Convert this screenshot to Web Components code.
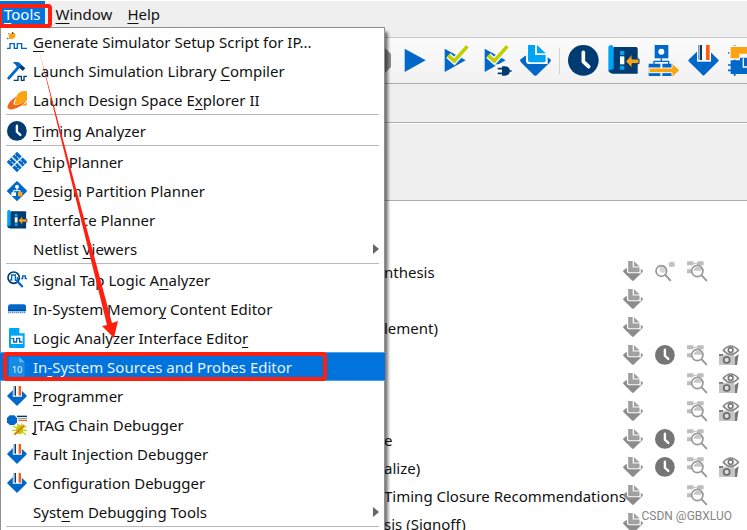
<!DOCTYPE html>
<html lang="en">
<head>
<meta charset="utf-8">
<title>Tools menu</title>
<style>
html, body { margin: 0; height: 100%; overflow: hidden; }
body { font: 15px/20px "Noto Sans", "Open Sans", sans-serif; color: #111; background: #efefef; }
</style>
</head>
<body>
<app-window></app-window>
<script>
const B = '#0068c9', N = '#003c71', C = '#00a4f4', O = '#fca311';
const diamond = (c) => `<path fill="${c}" stroke="${c}" stroke-width="6" stroke-linejoin="round" d="M46.500 4 89 46.500 46.500 89 4 46.500z"/>`;
const clock = (c) => `<circle cx="46" cy="46" r="46" fill="${c}"/><path d="M46 22V50L62 65" fill="none" stroke="#fff" stroke-width="11" stroke-linecap="round" stroke-linejoin="round"/>`;
const doc = (a, b, bg) => `<path fill="${a}" d="M16 32 2 43q-3 4 0 8L42 91q4 3 8 0L91 51q3-4 0-8L77 32z"/>
  <path fill="${bg}" d="M18 0H54L83 26V57H28Q18 57 18 47z"/><path fill="${b}" d="M24 0H45V30H77V46Q77 52 71 52H30Q24 52 24 46zM51 0 77 25H51z"/>`;
const play = `<path fill="${B}" d="M14 11 77 46 14 81z"/>`;
const check = `<path d="M25 32 43 48 81 5" fill="none" stroke="#fafafa" stroke-width="19"/><path d="M24 31 43 48 82 4" fill="none" stroke="#c1cf00" stroke-width="11"/>`;
const prog = diamond(B) + `<path fill="#fff" d="M27 -2H69V50H27z"/><path fill="${N}" d="M35 0h7v45h-7z"/><path fill="#8b99a8" d="M30 0h3v44h-3z"/><path fill="#ff5a10" d="M54 0h11v45H54z"/>`;
const iface = `<path fill="${N}" d="M17 6H84q5 0 5 5V86H14q-12-1-12-10z"/><path fill="${C}" d="M1 6q2-6 8-6t8 6V72Q6 72 1 80z"/>
  <path fill="${C}" d="M36 18h13v12H36zM36 62h13v12H36z"/><path fill="#fff" d="M36 34h13v24H36z"/>
  <path fill="${O}" stroke="${N}" stroke-width="3" d="M53 49 72 28V42H93V56H72V70z"/>`;
const glass = (x, y, r, c) => `<circle cx="${x}" cy="${y}" r="${r}" fill="none" stroke="${c}" stroke-width="5"/><path stroke="${c}" stroke-width="6" stroke-linecap="round" d="M${x + r - 4} ${y + r - 4} ${x + 27} ${y + 28}"/>`;
const ICONS = {
  stop: [93, `<path fill="#8c8c8c" d="M27 0H66L93 27V66L66 93H27L0 66V27z"/>`],
  play: [93, play],
  check: [93, play + check],
  checkplug: [93, play + check + `<path fill="#fafafa" d="M46 58H92V94H46z"/><path fill="${N}" d="M66 64h10q14 2 14 14T76 92H66z"/><path stroke="${N}" stroke-width="5" d="M53 71h14M53 85h14M88 78h7"/>`],
  compile: [93, doc(B, C, '#fafafa')],
  compileGrey: [93, doc('#8c8c8c', '#a0a0a0', '#fff')],
  clock: [93, clock(N)],
  clockGrey: [93, clock('#757575')],
  iface: [93, iface],
  chiptree: [93, `<path fill="${B}" d="M20 0h41v40H20z"/><circle cx="40" cy="20" r="9" fill="#fff"/><path fill="none" stroke="${B}" stroke-width="4" d="M40 40V50M18 58V49H62V58"/>
    <path fill="${B}" d="M2 56h35v37H2zM43 56h34v37H43z"/><path fill="${O}" stroke="#fafafa" stroke-width="3" d="M3 69H72V54L95 76 72 98V83H3z"/>`],
  prog: [93, prog],
  pins: [93, `<path stroke="${B}" stroke-width="5" d="M20 0V93M0 24H15M0 60H15M0 76H15M70 0V93"/><path fill="#fafafa" d="M4 2H93V44H4z"/><path fill="${O}" d="M8 6H93V26H34V40H8z"/><path fill="${B}" d="M8 46H36V38H93V87H8z"/><path fill="none" stroke="#fff" stroke-width="4" d="M46 40V66H70"/>`],
  simscript: [60, `<path fill="${O}" d="M5 10 11 4H25V15L17 21H7z"/><path fill="#222" d="M15 1h4v4h-4zM1 17h3v5H1zM4 4h3v3H4z"/><path fill="none" stroke="${B}" stroke-width="4" d="M0 49H9V35H22V49H31V35H44V49H60"/>`],
  hammer: [60, `<path stroke="${B}" stroke-width="8" d="M3 54 35 18"/><path fill="${N}" d="M18 5Q35-1 43 11L55 22 47 30 38 21 31 22Q30 10 18 5z"/><path fill="${B}" d="M18 5Q35-1 43 11L39 19 31 22Q30 10 18 5z"/><path fill="none" stroke="${N}" stroke-width="4" d="M20 58H33V46H43V58H51V46H60"/>`],
  planet: [60, `<path fill="#f0641e" d="M29 19Q3 36 1 51Q3 60 17 58Q42 53 60 31Q42 43 26 46Q12 46 29 19z"/><path fill="${O}" d="M60 4V31Q44 43 24 45Q22 40 29 18Q38 0 60 4zM60 37V44Q54 50 44 46Q54 43 60 37z"/>`],
  chip: [60, `<path fill="${B}" stroke="${B}" stroke-width="4" stroke-linejoin="round" d="M30 2 58 30 30 58 2 30z"/><path stroke="#fff" stroke-width="4" d="M14 14 46 46M46 14 14 46"/><path stroke="#fff" stroke-width="3" stroke-dasharray="8 4" d="M22 6 54 38M6 22 38 54"/>`],
  partition: [60, `<path fill="${B}" stroke="${B}" stroke-width="4" stroke-linejoin="round" d="M30 2 58 30 30 58 2 30z"/><circle cx="30" cy="17" r="6" fill="#fff"/><path fill="none" stroke="#fff" stroke-width="3" d="M30 20V29M19 36V29H39V36"/><path fill="#fff" d="M13 34H27V45H13z"/><path fill="${O}" d="M33 33H46V46H33z"/>`],
  signal: [60, `<circle cx="20" cy="23" r="17" fill="none" stroke="${N}" stroke-width="5"/><path stroke="${B}" stroke-width="7" stroke-linecap="round" d="M33 36 45 49"/><path fill="none" stroke="${B}" stroke-width="4" d="M8 30H14V15H25V31H31V21M42 26H47V18H55V26H60"/>`],
  memory: [60, `<path fill="${B}" d="M3 35V22Q4 16 10 16H50Q57 16 57 22V35z"/><path stroke="${N}" stroke-width="3" d="M3 34H57"/><path stroke="${B}" stroke-width="6" stroke-dasharray="3 3" d="M4 40H57"/>`],
  logic: [60, `<path fill="${C}" d="M6 4Q6 0 10 0H37L53 16V56Q53 60 49 60H10Q6 60 6 56z"/><path fill="#fff" d="M37 0 53 16H37z"/><path fill="#fff" d="M12 23H47V48H12z"/><path fill="none" stroke="${B}" stroke-width="4" d="M13 32H20V42H29V31H38V42H46"/>`],
  probes: [60, `<path fill="#168be8" d="M6 4Q6 0 10 0H37L53 16V56Q53 60 49 60H10Q6 60 6 56z"/><path fill="#64b7fa" d="M37 0 53 16H37z"/><text x="30" y="47" text-anchor="middle" fill="#e6f4ff" font-family="Noto Sans, sans-serif" font-size="28">10</text>`],
  jtag: [60, `<path fill="${B}" d="M8 1H22L30 9V22L22 30H8L0 22V9z"/><path stroke="${N}" stroke-width="4" d="M30 4H60"/><path stroke="#7890a8" stroke-width="3" d="M32 10H60"/><path stroke="#f0641e" stroke-width="4" d="M34 16H60"/>
    <ellipse cx="38" cy="44" rx="11" ry="14" fill="#c1cf00"/><path stroke="#c1cf00" stroke-width="4" d="M18 33 28 39M15 46H60M20 59 28 52M58 33 48 39M57 59 48 52M31 26 35 32M46 26 42 32"/><path stroke="#f0641e" stroke-width="5" d="M23 59 52 30"/>`],
  findGrey: [60, `<circle cx="20" cy="29" r="16" fill="#fff"/><circle cx="24" cy="24" r="11" fill="#d6d6d6"/>${glass(19, 30, 16, '#999')}<path fill="#c4c4c4" d="M41 6 47 2H56L60 7V14L55 18H44L41 13z"/>`],
  netGrey: [60, `<path fill="#bdbdbd" d="M0 1H19V13H0zM31 1H50V13H31zM0 25H15V37H0z"/><path stroke="#bdbdbd" stroke-width="3" d="M18 7H32"/><circle cx="31" cy="30" r="17" fill="#fff"/><path fill="#c8c8c8" d="M31 17H45V29H20Q22 17 31 17z"/>${glass(31, 30, 17, '#999')}`],
  snapGrey: [60, `<path fill="#c4c4c4" d="M0 29H46V60H0z"/><path fill="#777" d="M0 27H12V32H0zM47 36 59 28 54 60H47z"/><circle cx="23" cy="45" r="9" fill="#ddd" stroke="#666" stroke-width="5"/><path fill="#fff" stroke="#888" stroke-width="5" d="M13 16Q35-10 58 16 35 40 13 16z"/><circle cx="35" cy="15" r="7" fill="#fff" stroke="#777" stroke-width="5"/>`]
};

class UiIcon extends HTMLElement {
  constructor() {
    super();
    const root = this.attachShadow({ mode: 'open' });
    const [size, body] = ICONS[this.getAttribute('name')] || [60, ''];
    root.innerHTML = `<style>:host{display:block;flex:none;width:var(--icon,20px);height:var(--icon,20px)}svg{display:block;width:100%;height:100%;overflow:visible}</style>
      <svg viewBox="0 0 ${size} ${size}" aria-hidden="true">${body}</svg>`;
  }
}

class MenuTitle extends HTMLElement {
  constructor() {
    super();
    this.attachShadow({ mode: 'open' }).innerHTML = `<style>
      :host{display:block}
      button{all:unset;display:block;box-sizing:border-box;height:100%;padding:3px 4px;white-space:pre}
      :host([open]) button{background:#0074dc;color:#fff}
      ::slotted(u){text-underline-offset:3px}
      </style><button aria-haspopup="menu"><slot></slot></button>`;
  }
}

class MenuItem extends HTMLElement {
  constructor() {
    super();
    const icon = this.getAttribute('icon');
    this.attachShadow({ mode: 'open' }).innerHTML = `<style>
      :host{display:block}
      button{all:unset;box-sizing:border-box;width:100%;height:29px;display:flex;align-items:center;gap:6px;padding:0 6px 0 7px}
      .label{flex:1;white-space:pre}
      .space{width:20px}
      ::slotted(u){text-underline-offset:3px;text-decoration-thickness:1px}
      :host([selected]) button{background:#0074dc;color:#e8f3ff;border:solid #4aa3ef;border-width:1px 0}
      .more{width:0;border:solid transparent;border-width:5px 0 5px 6px;border-left-color:#666}
      </style><button role="menuitem">${icon ? `<ui-icon name="${icon}"></ui-icon>` : '<span class="space"></span>'}<span class="label"><slot></slot></span>${this.hasAttribute('submenu') ? '<span class="more"></span>' : ''}</button>`;
  }
}

class MenuSeparator extends HTMLElement {
  constructor() {
    super();
    this.attachShadow({ mode: 'open' }).innerHTML = `<style>:host{display:block;height:1px;margin:0 6px 1px;background:#b8b8b8}</style>`;
  }
}

class ToolsMenu extends HTMLElement {
  constructor() {
    super();
    this.attachShadow({ mode: 'open' }).innerHTML = `<style>
      :host{display:block;box-sizing:border-box;background:#fff;box-shadow:inset 0 1px #909090,inset 1px 0 #909090,inset -1px 0 #909090,3px 5px 3px #0008}
      </style><div role="menu" aria-label="Tools">
      <menu-item icon="simscript"><u>G</u>enerate Simulator Setup Script for IP...</menu-item>
      <menu-item icon="hammer">Launch Simulation Library <u>C</u>ompiler</menu-item>
      <menu-item icon="planet">Launch Design Space E<u>x</u>plorer II</menu-item>
      <menu-separator></menu-separator>
      <menu-item icon="clock"><u>T</u>iming Analyzer</menu-item>
      <menu-separator></menu-separator>
      <menu-item icon="chip">C<u>h</u>ip Planner</menu-item>
      <menu-item icon="partition"><u>D</u>esign Partition Planner</menu-item>
      <menu-item icon="iface">Interface Planner</menu-item>
      <menu-item submenu>Netlist <u>V</u>iewers</menu-item>
      <menu-separator></menu-separator>
      <menu-item icon="signal">Signal Tap Logic A<u>n</u>alyzer</menu-item>
      <menu-item icon="memory">In-System Memor<u>y</u> Content Editor</menu-item>
      <menu-item icon="logic">Logic Analyzer Interface Edito<u>r</u></menu-item>
      <menu-item icon="probes" selected>In<u>-</u>System Sources and Probes Editor</menu-item>
      <menu-item icon="prog"><u>P</u>rogrammer</menu-item>
      <menu-item icon="jtag"><u>J</u>TAG Chain Debugger</menu-item>
      <menu-item icon="prog">Fault Injection Debugger</menu-item>
      <menu-item icon="prog">Configuration Debugger</menu-item>
      <menu-item submenu>Syst<u>e</u>m Debugging Tools</menu-item>
      <menu-separator></menu-separator>
      </div>`;
  }
}

class ToolBar extends HTMLElement {
  constructor() {
    super();
    const tool = ([n, label]) => `<button aria-label="${label}"><ui-icon name="${n}"></ui-icon></button>`;
    this.attachShadow({ mode: 'open' }).innerHTML = `<style>
      :host{display:flex;align-items:center;box-sizing:border-box;height:47px;padding-left:355px;overflow:hidden;border:solid #c8c8c8;border-width:1px 0;border-bottom-color:#acacac;background:linear-gradient(#fbfbfb,#f1f1f1);--icon:31px}
      button{all:unset;flex:none;width:40px;display:flex;justify-content:center}
      i{flex:none;width:1px;height:26px;margin:0 3px 0 4px;background:#d2d2d2}
      </style>${[['stop', 'Stop'], ['play', 'Start compilation'], ['check', 'Analysis and elaboration'], ['checkplug', 'Analysis and synthesis'], ['compile', 'Compilation']].map(tool).join('')}<i></i>${[['clock', 'Timing'], ['iface', 'Interface'], ['chiptree', 'Hierarchy'], ['prog', 'Program'], ['pins', 'Pins']].map(tool).join('')}`;
  }
}

class TaskList extends HTMLElement {
  constructor() {
    super();
    const rows = [['', ''], ['', ''], ['nthesis', 'dfn'], ['', 'd'], ['lement)', 'd'], ['', 'dcns'], ['', 'd ns'], ['', 'd ns'],
      ['e', 'dcn'], ['alize)', 'dcns'], ['Timing Closure Recommendations', 'd n'], ['sis (Signoff)', 'd']];
    const map = { d: 'compileGrey', f: 'findGrey', c: 'clockGrey', n: 'netGrey', s: 'snapGrey' };
    this.attachShadow({ mode: 'open' }).innerHTML = `<style>
      :host{display:block;background:#fff;overflow:hidden;padding:0 2px 0 384px}
      table{border-collapse:collapse;width:100%;table-layout:fixed}
      td{height:28px;padding:0;white-space:nowrap}
      td:first-child{padding-top:2px;height:26px}
      col + col{width:32px}
      ui-icon{margin:0 auto}
      </style><table><colgroup><col><col><col><col><col></colgroup>${rows.map(([t, k]) => `<tr><td>${t}</td>${[0, 1, 2, 3].map(i => `<td>${map[k[i]] ? `<ui-icon name="${map[k[i]]}"></ui-icon>` : ''}</td>`).join('')}</tr>`).join('')}</table>`;
  }
}

class MarkUp extends HTMLElement {
  constructor() {
    super();
    this.attachShadow({ mode: 'open' }).innerHTML = `<style>:host{display:block;pointer-events:none}svg{display:block;overflow:visible}</style>
      <svg width="1" height="1" aria-hidden="true"><g fill="none" stroke="#ff1f0f" stroke-width="4"><rect x="0" y="6" width="50" height="20" rx="2"/><rect x="5" y="354" width="320" height="25" rx="2"/></g>
      <path fill="#ff1f0f" d="M39 50 112 323 118 321 114 338 102 326 107 325z"/></svg>`;
  }
}

class AppWindow extends HTMLElement {
  constructor() {
    super();
    this.attachShadow({ mode: 'open' }).innerHTML = `<style>
      :host{display:flex;flex-direction:column;height:100vh;overflow:hidden;position:relative}
      nav{display:flex;gap:7px;box-sizing:border-box;height:27px;border-top:1px solid #fff;flex:none}
      tool-bar{margin-top:10px;flex:none}
      .strip{height:38px;flex:none;border-bottom:1px solid #acacac}
      .panel{height:76px;flex:none;border-top:1px solid #fff;border-bottom:1px solid #acacac}
      task-list{flex:1;min-height:0}
      tools-menu{position:absolute;top:27px;left:0;width:385px;bottom:-10px}
      mark-up{position:absolute;top:0;left:0}
      .credit{position:absolute;right:15px;bottom:4px;font:12px/20px Roboto,"Liberation Sans",sans-serif;color:#858585}
      </style>
      <nav><menu-title open><u>T</u>ools</menu-title><menu-title><u>W</u>indow</menu-title><menu-title><u>H</u>elp</menu-title></nav>
      <tool-bar></tool-bar>
      <div class="strip"></div><div class="panel"></div>
      <task-list></task-list>
      <tools-menu></tools-menu>
      <mark-up></mark-up>
      <span class="credit">CSDN @GBXLUO</span>`;
  }
}

customElements.define('ui-icon', UiIcon);
customElements.define('menu-title', MenuTitle);
customElements.define('menu-item', MenuItem);
customElements.define('menu-separator', MenuSeparator);
customElements.define('tools-menu', ToolsMenu);
customElements.define('tool-bar', ToolBar);
customElements.define('task-list', TaskList);
customElements.define('mark-up', MarkUp);
customElements.define('app-window', AppWindow);
</script>
</body>
</html>
